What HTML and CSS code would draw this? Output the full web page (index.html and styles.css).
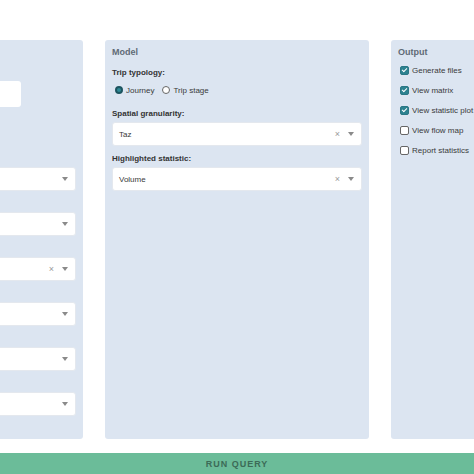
FILE: index.html
```html
<!DOCTYPE html>
<html lang="en">
<head>
    <meta charset="UTF-8">
    <meta name="viewport" content="width=device-width, initial-scale=1.0">
    <title>Query builder</title>
    <link rel="stylesheet" href="styles.css">
</head>
<body>
    <div class="page">
        <div class="panels">
            <div class="panel">
                <div class="panel-title"></div>
                <div class="label"></div>
                <div class="text-input"></div>
                <div class="filters">
                    <div class="group">
                        <div class="label"></div>
                        <div class="select"><span class="value"></span><span class="caret"></span></div>
                    </div>
                    <div class="group">
                        <div class="label"></div>
                        <div class="select"><span class="value"></span><span class="caret"></span></div>
                    </div>
                    <div class="group">
                        <div class="label"></div>
                        <div class="select"><span class="value"></span><span class="clear">×</span><span class="caret"></span></div>
                    </div>
                    <div class="group">
                        <div class="label"></div>
                        <div class="select"><span class="value"></span><span class="caret"></span></div>
                    </div>
                    <div class="group">
                        <div class="label"></div>
                        <div class="select"><span class="value"></span><span class="caret"></span></div>
                    </div>
                    <div class="group">
                        <div class="label"></div>
                        <div class="select"><span class="value"></span><span class="caret"></span></div>
                    </div>
                </div>
            </div>

            <div class="panel">
                <div class="panel-title">Model</div>
                <div class="label">Trip typology:</div>
                <div class="radios">
                    <label class="radio"><span class="dot checked"></span>Journey</label>
                    <label class="radio"><span class="dot"></span>Trip stage</label>
                </div>
                <div class="group">
                    <div class="label">Spatial granularity:</div>
                    <div class="select"><span class="value">Taz</span><span class="clear">×</span><span class="caret"></span></div>
                </div>
                <div class="group">
                    <div class="label">Highlighted statistic:</div>
                    <div class="select"><span class="value">Volume</span><span class="clear">×</span><span class="caret"></span></div>
                </div>
            </div>

            <div class="panel panel-output">
                <div class="panel-title">Output</div>
                <div class="checks">
                    <label class="check"><span class="box checked"></span>Generate files</label>
                    <label class="check"><span class="box checked"></span>View matrix</label>
                    <label class="check"><span class="box checked"></span>View statistic plot</label>
                    <label class="check"><span class="box"></span>View flow map</label>
                    <label class="check"><span class="box"></span>Report statistics</label>
                </div>
            </div>
        </div>
        <div class="run-bar">RUN QUERY</div>
    </div>
</body>
</html>
```

FILE: styles.css
```css
html, body {
    margin: 0;
    padding: 0;
    overflow: hidden;
    background-color: #ffffff;
}
body {
    font-family: "Liberation Sans", Arial, sans-serif;
    color: #333;
    width: 474px;
    height: 474px;
}
.page {
    padding-top: 40px;
}
.panels {
    display: flex;
    gap: 22px;
    margin-left: -181px;
    width: 900px;
}
.panel {
    flex: 0 0 264px;
    height: 399px;
    box-sizing: border-box;
    padding: 6px 7px;
    background-color: #dce5f1;
    border-radius: 3px;
}
.panel-title {
    height: 12px;
    line-height: 12px;
    font-size: 9px;
    font-weight: bold;
    color: #606a76;
    margin-bottom: 10px;
}
.label {
    height: 10px;
    line-height: 10px;
    font-size: 8px;
    font-weight: bold;
    color: #333;
}
.text-input {
    width: 195px;
    height: 26px;
    margin-top: 3px;
    background-color: #fff;
    border-radius: 3px;
}
.filters {
    margin-top: 47px;
}
.group {
    margin-bottom: 8px;
}
.select {
    display: flex;
    align-items: center;
    height: 24px;
    margin-top: 3px;
    box-sizing: border-box;
    padding: 0 7px 0 6px;
    background-color: #fff;
    border: 1px solid #e4e8ee;
    border-radius: 3px;
    font-size: 8px;
    color: #3a3a3a;
}
.select .value {
    flex: 1;
}
.select .clear {
    color: #9a9a9a;
    font-size: 9px;
    margin-right: 8px;
}
.select .caret {
    width: 0;
    height: 0;
    border-left: 3px solid transparent;
    border-right: 3px solid transparent;
    border-top: 4px solid #8a8a8a;
}
.radios {
    display: flex;
    gap: 8px;
    height: 12px;
    margin: 6px 0 13px 3px;
    align-items: center;
}
.radio {
    display: flex;
    align-items: center;
    font-size: 8px;
    color: #3a3a3a;
}
.dot {
    width: 6px;
    height: 6px;
    border: 1px solid #666;
    border-radius: 50%;
    background-color: #fff;
    margin-right: 3px;
}
.dot.checked {
    border: 2px solid #1d5560;
    width: 4px;
    height: 4px;
    background-color: #2f8a96;
}
.panel-output .panel-title {
    margin-bottom: 6px;
}
.checks {
    display: flex;
    flex-direction: column;
    gap: 8px;
    margin-left: 2px;
}
.check {
    display: flex;
    align-items: center;
    height: 12px;
    font-size: 8px;
    color: #3a3a3a;
    white-space: nowrap;
}
.box {
    position: relative;
    width: 7px;
    height: 7px;
    border: 1px solid #666;
    border-radius: 2px;
    background-color: #fff;
    margin-right: 3px;
}
.box.checked {
    border-color: #2a7785;
    background-color: #2d8290;
}
.box.checked::after {
    content: "";
    position: absolute;
    left: 2px;
    top: 0px;
    width: 2px;
    height: 4px;
    border: solid #fff;
    border-width: 0 1.5px 1.5px 0;
    transform: rotate(45deg);
}
.run-bar {
    margin-top: 14px;
    height: 22px;
    line-height: 22px;
    background-color: #6bbc99;
    text-align: center;
    font-size: 9px;
    font-weight: bold;
    letter-spacing: 1px;
    color: #3c6b57;
}
```
